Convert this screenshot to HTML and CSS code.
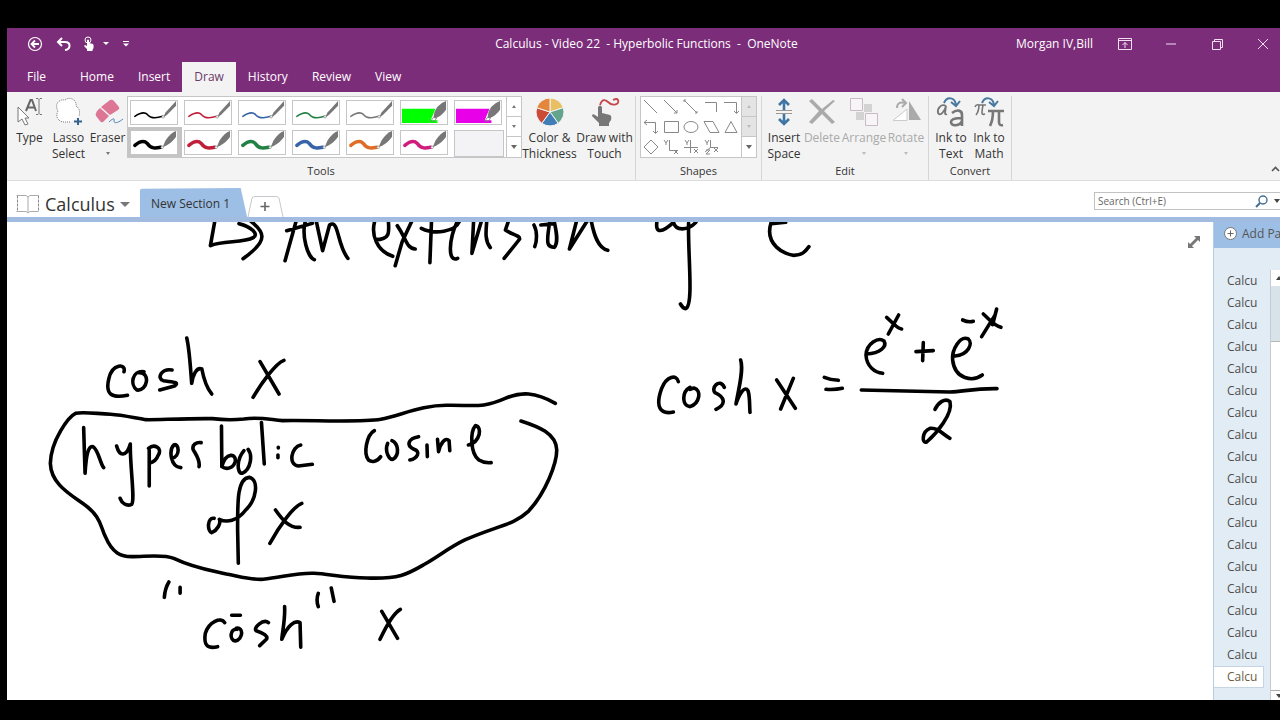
FILE: index.html
```html
<!DOCTYPE html>
<html lang="en">
<head>
<meta charset="utf-8">
<title>Calculus - Video 22 - Hyperbolic Functions - OneNote</title>
<link rel="stylesheet" href="styles.css">
</head>
<body>
<svg class="defs" aria-hidden="true">
  <symbol id="thin" viewBox="0 0 46 24"><path d="M3 16C9 12 13 11 16 14C20 19 26 18 32 16" fill="none" stroke="currentColor" stroke-width="1.6" stroke-linecap="round"/><path d="M32 18L35 12L46 0V5L37 14Z" fill="#777"/><circle cx="32.500" cy="16.500" r="1.300" fill="#fff" stroke="#777" stroke-width=".6"/></symbol>
  <symbol id="thick" viewBox="0 0 46 24"><path d="M3 15C9 10 13 10 16 13C20 19 25 18 30 17" fill="none" stroke="currentColor" stroke-width="3.600" stroke-linecap="round"/><path d="M32 17L35 10Q40 2 46 0V6Q42 12 36 15Z" fill="#777"/><circle cx="31.500" cy="17" r="1.300" fill="#fff" stroke="#777" stroke-width=".6"/></symbol>
  <symbol id="marker" viewBox="0 0 46 24"><path d="M0 8H35L30 20L37 20V23H0Z" fill="currentColor"/><path d="M33 17Q34 4 46 0V9Q42 15 35 18Z" fill="#777"/><path d="M30 21L33 17L36 18L34 21Z" fill="none" stroke="#777" stroke-width=".8"/></symbol>
</svg>
<div class="app">
  <header class="titlebar">
    <div class="quick">
      <button aria-label="Back"><svg width="16" height="16" viewBox="0 0 16 16"><circle cx="8" cy="8" r="6.500" fill="none" stroke="#fff" stroke-width="1.200"/><path d="M12 8H5M8 4.500L4.500 8L8 11.500" fill="none" stroke="#fff" stroke-width="1.800"/></svg></button>
      <button aria-label="Undo"><svg width="16" height="16" viewBox="0 0 16 16"><path d="M6 2L2 6L6 10M2 6H9C15 6 15 13 9 14" fill="none" stroke="#fff" stroke-width="2"/></svg></button>
      <button class="touch" aria-label="Touch mode"><svg width="12" height="16" viewBox="0 0 12 16"><circle cx="5" cy="4" r="3" fill="none" stroke="#fff"/><path d="M4 4Q5 3 6 4V7L10 8Q11 9 10.500 12L9.500 14V15H4V13L1 10L2 9L4 10Z" fill="#fff"/></svg></button>
      <button class="mini" aria-label="Touch options"><svg width="6" height="4"><path d="M0 0H6L3 3Z" fill="#fff"/></svg></button>
      <button class="custom" aria-label="Customize toolbar"><svg width="6" height="6"><path d="M0 .5H6" stroke="#fff"/><path d="M0 2.500H6L3 5.500Z" fill="#fff"/></svg></button>
    </div>
    <h1 class="title">Calculus - Video 22&nbsp; - Hyperbolic Functions&nbsp; -&nbsp; OneNote</h1>
    <div class="window">
      <span class="user">Morgan IV,Bill</span>
      <button aria-label="Ribbon display"><svg width="14" height="12" viewBox="0 0 14 12" fill="none" stroke="#f3dff2"><path d="M.5 .5H13.500V11.500H.5ZM.5 2.500H13.500M7 10V4.500M4.500 7L7 4.500L9.500 7"/></svg></button>
      <button aria-label="Minimize"><svg width="10" height="2"><path d="M0 1H10" stroke="#f3dff2"/></svg></button>
      <button aria-label="Restore"><svg width="11" height="11" viewBox="0 0 11 11" fill="none" stroke="#f3dff2"><path d="M.5 2.500H8.500V10.500H.5ZM2.500 2.500V.5H10.500V8.500H8.500"/></svg></button>
      <button aria-label="Close"><svg width="12" height="12" viewBox="0 0 12 12" stroke="#f3dff2"><path d="M1 1L11 11M11 1L1 11"/></svg></button>
    </div>
  </header>
  <nav class="tabs">
    <button class="file">File</button><button>Home</button><button>Insert</button><button class="active">Draw</button><button>History</button><button>Review</button><button>View</button>
  </nav>

  <section class="ribbon">
    <div class="group tools">
      <div class="row">
        <button class="cmd"><svg width="32" height="32" viewBox="0 0 32 32"><path d="M4 11V26L8 23L11 29L14 28L11 22H15Z" fill="#fff" stroke="#777"/><path d="M12 15L16.500 4H18L22 15M13.500 11.500H20.500" fill="none" stroke="#666" stroke-width="2"/><path d="M22 2.500H24L25 3.500L26 2.500H28M25 3.500V17.500M22 18.500H24L25 17.500L26 18.500H28" fill="none" stroke="#777"/></svg><span>Type</span></button>
        <button class="cmd"><svg width="32" height="32" viewBox="0 0 32 32"><path d="M17 26H11C5 26 2 20 5 15C1 8 6 3 12 4C17 0 24 4 23 10C27 13 27 16 26 20" fill="#fff" stroke="#777" stroke-dasharray="1 1"/><path d="M25 22V29M21 25.500H29" stroke="#35658f" stroke-width="2"/></svg><span>Lasso<br>Select</span></button>
        <button class="cmd"><svg width="32" height="32" viewBox="0 0 32 32"><path d="M18 4Q20 3 22 5L27 11Q28 13 26 14L18 19L9 11Z" fill="#dd7595"/><path d="M8 12L17 20L11 26Q9 27 8 25L4 20Q3 18 5 15Z" fill="#dd7595"/><path d="M17 26C21 22 23 22 22 25C22 28 26 27 31 23" fill="none" stroke="#4e86b5"/></svg><span>Eraser</span><i class="caret"></i></button>
        <div class="gallery">
          <div class="pens">
            <button class="pen black" aria-label="Black pen"><svg><use href="#thin"/></svg></button>
            <button class="pen red" aria-label="Red pen"><svg><use href="#thin"/></svg></button>
            <button class="pen blue" aria-label="Blue pen"><svg><use href="#thin"/></svg></button>
            <button class="pen green" aria-label="Green pen"><svg><use href="#thin"/></svg></button>
            <button class="pen gray" aria-label="Gray pen"><svg><use href="#thin"/></svg></button>
            <button class="pen lime" aria-label="Green highlighter"><svg><use href="#marker"/></svg></button>
            <button class="pen magenta" aria-label="Magenta highlighter"><svg><use href="#marker"/></svg></button>
            <button class="pen black selected" aria-label="Thick black pen"><svg><use href="#thick"/></svg></button>
            <button class="pen red" aria-label="Thick red pen"><svg><use href="#thick"/></svg></button>
            <button class="pen green" aria-label="Thick green pen"><svg><use href="#thick"/></svg></button>
            <button class="pen blue" aria-label="Thick blue pen"><svg><use href="#thick"/></svg></button>
            <button class="pen orange" aria-label="Thick orange pen"><svg><use href="#thick"/></svg></button>
            <button class="pen pink" aria-label="Thick pink pen"><svg><use href="#thick"/></svg></button>
            <button class="pen empty" aria-label="Empty pen slot"></button>
          </div>
          <div class="steps">
            <button aria-label="Previous pens"><i class="caret up"></i></button>
            <button aria-label="Next pens"><i class="caret"></i></button>
            <button aria-label="All pens"><i class="caret bar"></i></button>
          </div>
        </div>
        <button class="cmd wide"><svg width="32" height="32" viewBox="0 0 32 32" stroke="#f3f3f3"><path d="M16 16V2A14 14 0 0 1 29.300 11.700Z" fill="#e8bf62"/><path d="M16 16L29.300 11.700A14 14 0 0 1 24.200 27.300Z" fill="#64a48c"/><path d="M16 16L24.200 27.300A14 14 0 0 1 7.800 27.300Z" fill="#417eb7"/><path d="M16 16L7.800 27.300A14 14 0 0 1 2.700 11.700Z" fill="#cc4b37"/><path d="M16 16L2.700 11.700A14 14 0 0 1 16 2Z" fill="#e4873c"/></svg><span>Color &amp;<br>Thickness</span></button>
        <button class="cmd wide"><svg width="32" height="32" viewBox="0 0 32 32"><path d="M11 9C13 3 16 3 19 6C24 11 31 8 29 4Q28 2 24 4" fill="none" stroke="#c6474b" stroke-width="1.800"/><path d="M9 11Q11 8 13 11V17L21 19Q23 20 22 24L20 27V30H10V27L3 20Q3 17 6 19L9 21Z" fill="#777"/></svg><span>Draw with<br>Touch</span></button>
      </div>
      <div class="label">Tools</div>
    </div>

    <div class="group forms">
      <div class="row">
        <div class="gallery">
          <div class="shapes">
            <button aria-label="Line"><svg viewBox="0 0 20 20"><path d="M3 3L16 16"/></svg></button>
            <button aria-label="Arrow"><svg viewBox="0 0 20 20"><path d="M3 3L16 16M16 13V16H13"/></svg></button>
            <button aria-label="Double arrow"><svg viewBox="0 0 20 20"><path d="M3 3L16 16M16 14V16H14M3 5V3H5"/></svg></button>
            <button aria-label="Elbow"><svg viewBox="0 0 20 20"><path d="M4 5.500H15.500V15"/></svg></button>
            <button aria-label="Elbow arrow"><svg viewBox="0 0 20 20"><path d="M3 5.500H15.500V16M13 14L15.500 16.500L18 14"/></svg></button>
            <button aria-label="Double elbow arrow"><svg viewBox="0 0 20 20"><path d="M3 5.500H14.500V16M12 14L14.500 16.500L17 14M6 3L3 5.500L6 8"/></svg></button>
            <button aria-label="Rectangle"><svg viewBox="0 0 20 20"><path d="M3.500 4.500H17.500V15.500H3.500Z"/></svg></button>
            <button aria-label="Ellipse"><svg viewBox="0 0 20 20"><ellipse cx="10" cy="10" rx="7" ry="5.500"/></svg></button>
            <button aria-label="Parallelogram"><svg viewBox="0 0 20 20"><path d="M3 4.500H12L18 15.500H9Z"/></svg></button>
            <button aria-label="Triangle"><svg viewBox="0 0 20 20"><path d="M10 4.500L16 15.500H4Z"/></svg></button>
            <button aria-label="Diamond"><svg viewBox="0 0 20 20"><path d="M10 3L17 10L10 17L3 10Z"/></svg></button>
            <button aria-label="Two axes"><svg viewBox="0 0 20 20"><path d="M8.500 3V13.500H17M3 3L5 6L7 3M5 6V8M13 13L17 17M17 13L13 17"/></svg></button>
            <button aria-label="Crossed axes"><svg viewBox="0 0 20 20"><path d="M9.500 3V16M3 10.500H17M4 3L6 6L8 3M6 6V8M13 12L17 16M17 12L13 16"/></svg></button>
            <button aria-label="Three axes"><svg viewBox="0 0 20 20"><path d="M9.500 3V10.500H17M10 10L4 15M4 3L6 6L8 3M6 6V8M13 11L17 15M17 11L13 15M5 13H9L5 17H9"/></svg></button>
          </div>
          <div class="steps">
            <button class="off" disabled aria-label="Previous shapes"><i class="caret up"></i></button>
            <button class="off" disabled aria-label="Next shapes"><i class="caret"></i></button>
            <button aria-label="All shapes"><i class="caret bar"></i></button>
          </div>
        </div>
      </div>
      <div class="label">Shapes</div>
    </div>

    <div class="group">
      <div class="row">
        <button class="cmd"><svg width="32" height="32" viewBox="0 0 32 32"><path d="M16 14V4M11 9L16 4L21 9M16 18V28M11 23L16 28L21 23" fill="none" stroke="#3e75a3" stroke-width="2.600"/><path d="M8 14.500H24M8 17.500H24" stroke="#999"/></svg><span>Insert<br>Space</span></button>
        <button class="cmd" disabled><svg width="32" height="32" viewBox="0 0 32 32"><path d="M3 5L6 3L16 13L27 4L29 5L18 15L29 26L26 28L16 18L6 28L3 26L13 15Z" fill="#aaa"/></svg><span>Delete</span></button>
        <button class="cmd mid" disabled><svg width="32" height="32" viewBox="0 0 32 32"><path d="M16 8H24V16H16ZM8 16H16V24H8Z" fill="#d3d3d3"/><path d="M2.500 2.500H14.500V14.500H2.500ZM17.500 17.500H29.500V29.500H17.500Z" fill="#f8f5f8" stroke="#c9bac9"/></svg><span>Arrange</span><i class="caret"></i></button>
        <button class="cmd" disabled><svg width="32" height="32" viewBox="0 0 32 32"><path d="M19 5V24H31Z" fill="#aaa"/><path d="M17 13V24.500H3Z" fill="#fff" stroke="#ccc"/><path d="M7 12Q7 5 15 7M12 3L16 7L12 11" fill="none" stroke="#aaa" stroke-width="2"/></svg><span>Rotate</span><i class="caret"></i></button>
      </div>
      <div class="label">Edit</div>
    </div>

    <div class="group">
      <div class="row">
        <button class="cmd"><svg width="32" height="32" viewBox="0 0 32 32" fill="none" stroke="#777"><path d="M9 7C12 0 20 1 21 9M16 6L21 10L25 5" stroke="#47789f" stroke-width="2"/><path d="M11 10C6 7 2 13 3 17C5 21 10 15 11 10L10 17Q10 19 12 18" stroke-width="1.800"/><path d="M17 17C22 13 27 14 27 19V30M27 22C20 22 16 23 16 26C16 31 25 30 27 25" stroke-width="2.600"/></svg><span>Ink to<br>Text</span></button>
        <button class="cmd"><svg width="32" height="32" viewBox="0 0 32 32" fill="none" stroke="#777"><path d="M9 7C12 0 20 1 21 9M16 6L21 10L25 5" stroke="#47789f" stroke-width="2"/><path d="M2 11Q3 8 6 9H13M6 9Q6 15 3 19M10 9Q9 14 9 17Q9 19 12 18" stroke-width="1.600"/><path d="M15 15H31M20 15Q20 24 17 30M26 15V26Q26 30 30 29" stroke-width="2.600"/></svg><span>Ink to<br>Math</span></button>
      </div>
      <div class="label">Convert</div>
    </div>
    <button class="collapse" aria-label="Collapse ribbon"><svg width="9" height="6" viewBox="0 0 9 6"><path d="M1 5L4.500 1.500L8 5" fill="none" stroke="#555" stroke-width="1.600"/></svg></button>
  </section>

  <section class="sections">
    <button class="notebook"><svg width="24" height="20" viewBox="0 0 24 20" fill="none" stroke="#888"><path d="M1.500 1.500V17.500M22.500 1.500V17.500" stroke-dasharray="3 1"/><path d="M.5 1.500H10L12 3L14 1.500H22.500M.5 17.500H10L12 19L14 17.500H22.500M12 3V18" stroke="#aaa"/></svg><span>Calculus</span><i class="caret big"></i></button>
    <button class="section">New Section 1</button>
    <button class="new" aria-label="New section"><svg width="37" height="21" viewBox="0 0 37 21"><path d="M1 21L5 2Q6 .5 8 .5H29Q31 .5 32 2L36 21" fill="#fff" stroke="#c5c9ce"/><path d="M18 6V15M13.500 10.500H22.500" stroke="#666" stroke-width="1.600"/></svg></button>
    <div class="search"><input type="search" placeholder="Search (Ctrl+E)" aria-label="Search"><button aria-label="Search"><svg width="13" height="13" viewBox="0 0 13 13"><circle cx="8" cy="5" r="4" fill="none" stroke="#426e94" stroke-width="1.400"/><path d="M5 8L1 12" stroke="#426e94" stroke-width="2"/></svg></button><button class="scope" aria-label="Search scope"><i class="caret dark"></i></button></div>
  </section>

  <div class="work">
    <main class="page">
      <svg class="ink" width="1206" height="478" viewBox="7 222 1206 478" role="img" aria-label="Handwritten notes: cosh x, hyperbolic cosine of x, cosh x equals e to the x plus e to the minus x over 2">
        <g transform="translate(190 215) scale(.408 .3333)">
          <path d="M62 10L50 92C80 75 130 85 155 68C170 58 150 35 120 26M140 10C185 50 195 75 130 131M262 10L233 137M285 10C270 60 290 130 305 134M237 47L300 25M308 10L325 107L342 30C365 10 360 90 387 130"/>
          <path d="M455 74C492 74 488 50 486 15M455 10C440 60 460 110 497 124M508 32C530 70 530 100 552 102M545 15L520 80L503 152M592 15L588 143M567 40C600 60 650 50 660 20M655 20C635 70 630 145 656 130M695 20L691 115L715 15M728 10C725 50 722 75 736 98"/>
          <path d="M780 20L773 45C790 60 808 60 808 72Q800 85 770 130M843 30C852 50 850 80 845 95M882 20C870 100 880 95 893 97C905 80 896 40 892 15M860 30L892 26M948 15L930 102L975 15M983 15C990 60 1000 100 1024 106M1145 15C1138 62 1160 50 1185 22C1190 48 1220 48 1240 22M1222 25C1220 120 1235 270 1215 281Q1208 280 1202 267M1425 26L1460 22M1425 20C1405 90 1460 120 1480 121C1500 121 1508 110 1517 95"/>
        </g>
        <g transform="translate(640 300) scale(.3333)">
          <path d="M115 245C110 222 80 228 65 265C45 320 60 345 100 336M150 262C125 275 125 318 150 320C180 310 185 270 162 264L150 268M253 262C238 232 212 265 225 278C252 290 262 312 228 328M302 180C312 210 295 270 288 312C300 275 315 258 324 272C330 290 328 310 330 337M410 240L466 325M460 235L422 327M553 232Q572 240 595 241M558 268Q585 270 607 265M664 270L930 276C970 275 1000 265 1071 266"/>
          <path d="M680 162C720 160 742 140 732 123C715 110 680 130 678 165C680 200 705 218 728 220M740 52C760 70 770 85 785 87M776 45L745 102M828 155L880 152M850 128L848 182M945 168C985 165 1000 130 985 117C960 105 935 150 938 180C945 240 1000 245 1027 225M968 60Q985 68 1000 64M1030 42C1050 60 1060 75 1083 82M1066 44L1025 110M1070 27L1058 74M885 328C895 308 915 292 930 305C940 340 890 400 860 426C845 432 845 395 870 385C895 382 910 405 930 415"/>
        </g>
        <g transform="translate(30 320) scale(.3507 .3333)">
          <path d="M268 155C275 130 235 130 225 175C213 225 235 235 278 226M325 155C290 150 285 195 305 210C335 215 345 155 310 158M405 150C375 145 360 175 380 182C400 186 430 185 412 198L370 210M447 54C455 90 458 150 461 190C465 165 475 140 490 147C495 175 505 205 518 222M656 125L710 222M724 121C700 130 660 190 636 232"/>
          <path d="M1498 250C1440 215 1400 215 1355 235C1290 265 1270 255 1190 256C1120 255 1060 285 1000 298C940 308 800 300 720 302C680 298 650 290 610 297C570 302 550 300 520 296C440 295 360 300 330 299C290 292 260 285 230 283C180 280 150 275 130 280C110 290 60 360 58 430C60 490 110 520 150 550C205 590 200 620 215 650C235 700 260 710 290 710C330 710 380 702 410 715C470 745 520 752 560 762C600 770 630 780 665 778C720 772 760 758 810 760C850 762 900 773 960 774C1060 778 1080 760 1130 730C1170 705 1200 680 1240 660C1330 618 1380 615 1420 575C1470 520 1502 430 1502 390C1500 340 1450 320 1400 303"/>
          <path d="M153 323L157 460C160 410 165 375 180 380C195 390 200 430 210 443M247 378C255 410 275 412 286 372C285 440 300 540 290 553C275 560 262 550 257 535M340 390V498M338 385C355 370 378 385 366 405C360 422 350 428 340 430M404 415C430 410 425 368 410 375C396 390 400 440 430 443M488 368C474 366 462 374 465 388C472 402 486 420 482 440M546 318L547 440C558 395 590 400 585 425C580 445 560 450 547 440M610 392C588 420 590 460 605 460C630 450 635 405 622 388M660 308L668 432M708 382V384M707 405V413M772 375C745 380 735 435 765 438L805 433"/>
          <path d="M982 332C960 345 950 400 965 420C975 428 990 425 1000 410M1020 370C1010 395 1025 420 1035 418C1055 405 1050 370 1032 362M1108 350C1080 355 1070 375 1095 388C1115 395 1105 415 1083 420M1132 375L1133 410M1162 358L1165 395C1170 370 1185 350 1195 362L1197 392M1250 375C1285 365 1290 320 1270 317C1255 335 1255 400 1280 420Q1295 430 1315 428"/>
        </g>
        <g transform="translate(30 470) scale(.3507 .3333)">
          <path d="M525 145C505 140 505 185 518 188C535 180 545 160 540 148C560 158 590 155 615 120C645 90 655 30 625 22C590 25 592 100 592 180L594 280M700 120C720 150 740 175 770 172M775 100C750 110 710 170 684 220M396 336Q385 355 383 382M428 352V370M822 370Q815 390 822 410M859 354L867 394"/>
          <path d="M555 458C545 440 510 455 500 490C493 535 515 535 535 530M575 436H600M590 478C570 475 568 510 585 513C608 508 610 470 588 475M680 458C665 445 635 475 645 482C665 488 680 500 674 508L655 527M726 410C728 450 720 480 718 508C735 465 755 450 770 458L772 532M1003 424L1048 505M1056 418C1035 430 1015 470 998 508"/>
        </g>
      </svg>
      <button class="expand" aria-label="Full page view"><svg width="12" height="12" viewBox="0 0 12 12"><path d="M6 0H12V6L10 4L4 10L6 12H0V6L2 8L8 2Z" fill="#777"/></svg></button>
    </main>
    <aside class="pages">
      <button class="add"><svg width="13" height="13" viewBox="0 0 13 13"><circle cx="6.500" cy="6.500" r="6" fill="#fff" stroke="#777"/><path d="M6.500 3.500V9.500M3.500 6.500H9.500" stroke="#666"/></svg><span>Add Page</span></button>
      <div class="list">
        <ul>
          <li><a href="#">Calcu</a></li><li><a href="#">Calcu</a></li><li><a href="#">Calcu</a></li><li><a href="#">Calcu</a></li><li><a href="#">Calcu</a></li><li><a href="#">Calcu</a></li><li><a href="#">Calcu</a></li><li><a href="#">Calcu</a></li><li><a href="#">Calcu</a></li><li><a href="#">Calcu</a></li><li><a href="#">Calcu</a></li><li><a href="#">Calcu</a></li><li><a href="#">Calcu</a></li><li><a href="#">Calcu</a></li><li><a href="#">Calcu</a></li><li><a href="#">Calcu</a></li><li><a href="#">Calcu</a></li><li><a href="#">Calcu</a></li><li class="current"><a href="#">Calcu</a></li>
        </ul>
        <div class="scroll">
          <button aria-label="Scroll up"><i class="caret up dark"></i></button>
          <div class="track"></div>
          <div class="thumb"></div>
          <button class="down" aria-label="Scroll down"><i class="caret dark"></i></button>
        </div>
      </div>
    </aside>
  </div>
</div>
</body>
</html>
```
FILE: styles.css
```css
* { box-sizing: border-box; }
body {
  margin: 0;
  height: 100vh;
  padding: 28px 0 20px 7px;
  background: #000;
  overflow: hidden;
  font: 12px/16px "Open Sans", "Noto Sans", sans-serif;
  color: #333;
}
button { font: inherit; color: inherit; background: none; border: 0; padding: 0; margin: 0; }
.defs { display: none; }

/* The window runs slightly past the right edge of the screen. */
.app { display: flex; flex-direction: column; width: calc(100% + 6px); height: 100%; background: #fff; }

.titlebar { display: grid; grid-template-columns: 1fr auto 1fr; align-items: center; height: 32px; flex: none; background: #7c2d7a; color: #fff; font-size: 11px; }
.titlebar button { display: flex; align-items: center; justify-content: center; height: 32px; }
.quick { display: flex; padding-left: 13px; }
.quick button { width: 29px; }
.quick .touch { width: 22px; }
.quick .mini { width: 12px; }
.quick .custom { width: 28px; }
.title { margin: 0; font-size: 12px; font-weight: 400; white-space: nowrap; }
.window { display: flex; align-items: center; justify-content: flex-end; }
.window button { width: 46px; }
.user { padding-right: 9px; font-size: 12px; }

.tabs { display: flex; height: 32px; flex: none; padding: 2px 0 0 8px; background: #7c2d7a; color: #fff; }
.tabs button { padding: 0 12px; }
.tabs .file { margin-right: 10px; }
.tabs .active { background: #f3f3f3; color: #6b3769; }

.ribbon { display: flex; flex: none; height: 89px; padding: 4px 0 0; background: #f3f3f3; border-bottom: 1px solid #dcdcdc; position: relative; }
.group { display: flex; flex-direction: column; justify-content: space-between; padding: 0 3px; border-right: 1px solid #d6d6d6; }
.forms { padding: 0 4px; }
.row { display: flex; }
.label { text-align: center; font-size: 11px; line-height: 18px; }
.cmd { display: flex; flex-direction: column; align-items: center; width: 38px; white-space: nowrap; }
.cmd span { padding-top: 2px; text-align: center; }
.tools .cmd { width: 39px; }
.tools .wide { width: 55px; }
.cmd.mid { width: 46px; }
.cmd:disabled { color: #aaa; }
.cmd .caret { margin-top: 6px; }

.caret { width: 0; height: 0; border: 2px solid transparent; border-top: 3px solid #777; border-bottom: 0; }
.caret.up { border-top: 0; border-bottom: 3px solid #777; }
.cmd:disabled .caret, .off .caret { border-top-color: #bbb; }
.off .caret.up { border-bottom-color: #bbb; }
.caret.bar { border: 3px solid transparent; border-top: 4px solid #666; border-bottom: 0; }
.caret.big { border: 5px solid transparent; border-top: 5px solid #777; border-bottom: 0; }
.caret.dark { border: 3px solid transparent; border-top: 4px solid #444; border-bottom: 0; }
.caret.up.dark { border-top: 0; border-bottom: 4px solid #444; }

.gallery { display: flex; height: 62px; border: 1px solid #c6c6c6; background: #fff; }
.pens { display: grid; grid-template-columns: repeat(7, 54px); grid-template-rows: 30px 30px; }
.pen { padding: 3px 2px; }
.pen svg, .pen.empty::after { display: block; width: 48px; height: 25px; border: 1px solid #c6c6c6; background: #fff; }
.pen.empty::after { content: ""; background: #f3f2f5; }
.selected { background: #c4c4c4; }
.black { color: #000; }
.red { color: #c01f3a; }
.blue { color: #3763a8; }
.green { color: #218145; }
.gray { color: #777; }
.orange { color: #df6c27; }
.pink { color: #d01b7c; }
.lime { color: #0f0; }
.magenta { color: #e800e8; }
.steps { display: grid; grid-template-rows: repeat(3, 20px); width: 15px; border-left: 1px solid #c6c6c6; }
.steps button { display: flex; align-items: center; justify-content: center; border-bottom: 1px solid #c6c6c6; }
.steps button:last-child { border-bottom: 0; }
.steps .off { background: #e4e4e4; }
.shapes { display: grid; grid-template-columns: repeat(5, 20px); grid-template-rows: repeat(3, 20px); }
.shapes svg { display: block; width: 20px; height: 20px; fill: none; stroke: #888; }
.collapse { position: absolute; right: 6px; bottom: 4px; }

.sections { display: flex; align-items: flex-end; flex: none; height: 41px; border-bottom: 5px solid #a1bce0; }
.notebook { display: flex; align-items: center; gap: 5px; height: 26px; width: 133px; padding-left: 9px; font-size: 18px; }
.notebook span { flex: 1; text-align: left; }
.notebook svg { flex: none; }
.notebook .caret { margin-right: 10px; }
.section { height: 29px; padding: 3px 17px 0 11px; background: #9dbfe5; clip-path: polygon(0 3%, 94% 0, 100% 100%, 0 100%); border-radius: 3px 5px 0 0; font-size: 12px; }
.new { height: 21px; }
.new svg { display: block; }
.search { display: flex; align-items: center; width: 192px; height: 18px; margin: 0 0 7px auto; border: 1px solid #c2c2c2; }
.search input { flex: 1; min-width: 0; border: 0; padding: 0 3px; font: 10px "Open Sans", "Noto Sans", sans-serif; outline: 0; }
.search input::placeholder { color: #666; }
.search button { display: flex; }
.search .scope { padding: 0 5px 0 6px; }

.work { display: flex; flex: 1; min-height: 0; }
.page { flex: 1; min-width: 0; position: relative; overflow: hidden; }
.ink { display: block; }
.ink path { fill: none; stroke: #000; stroke-width: 3.6px; stroke-linecap: round; stroke-linejoin: round; vector-effect: non-scaling-stroke; }
.expand { position: absolute; top: 14px; right: 13px; }
.expand svg { display: block; }
.pages { display: flex; flex-direction: column; width: 73px; flex: none; background: #e2ecf5; border-left: 1px solid #b5cce3; overflow: hidden; }
.add { display: flex; align-items: center; flex: none; gap: 5px; height: 26px; padding: 0 0 3px 10px; background: #9dbfe5; color: #555; white-space: nowrap; }
.add svg { flex: none; }
.list { display: flex; flex: 1; min-height: 0; padding-top: 22px; }
.list ul { list-style: none; margin: 0; padding: 0; width: 50px; }
.list li { height: 22px; padding-left: 13px; line-height: 22px; }
.list a { color: #4d4d4d; text-decoration: none; }
.list .current { background: #fff; border: 1px solid #c5d5e4; border-left: 0; line-height: 20px; }
.current a { color: #6a5d42; }
.scroll { display: flex; flex-direction: column; width: 16px; margin-left: 6px; border-left: 1px solid #c3cbd2; background: #fff; }
.scroll button { display: flex; align-items: center; justify-content: center; flex: none; height: 16px; background: #fff; }
.track { height: 56px; flex: none; background: #d7e2e9; border-bottom: 1px solid #b9b9b9; }
.thumb { flex: 1; background: #fff; }
.scroll .down { height: 10px; border-top: 1px solid #aaa; }
```
